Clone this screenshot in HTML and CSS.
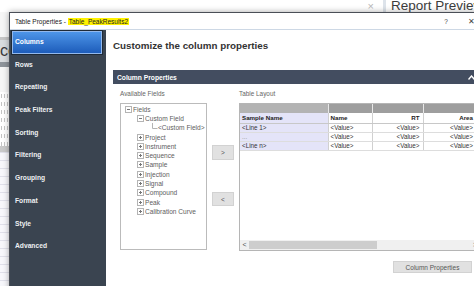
FILE: index.html
```html
<!DOCTYPE html>
<html lang="en">
<head>
  <meta charset="UTF-8" />
  <meta name="viewport" content="width=device-width, initial-scale=1.0" />
  <title>Table Properties</title>
  <link rel="stylesheet" href="styles.css">
</head>
<body>
  <div class="backdrop">
    <div class="bg-top">
      <div class="bg-pane"><span class="bg-close">×</span></div>
      <div class="bg-preview">Report Preview</div>
    </div>
    <div class="bg-strip">
      <div class="bg-gap"></div>
      <div class="bg-rule"></div>
      <div class="bg-head">ce</div>
      <div class="bg-rule dark"></div>
      <div class="bg-gap"></div>
      <div class="bg-dots"></div>
      <div class="bg-band"></div>
      <div class="bg-lines"></div>
    </div>
  </div>

  <div class="dialog">
    <div class="titlebar">
      <span class="title">Table Properties - <mark>Table_PeakResults2</mark></span>
      <span class="help">?</span>
      <span class="close">✕</span>
    </div>

    <div class="dialog-body">
      <nav class="sidebar">
        <a class="active" href="#">Columns</a>
        <a href="#">Rows</a>
        <a href="#">Repeating</a>
        <a href="#">Peak Filters</a>
        <a href="#">Sorting</a>
        <a href="#">Filtering</a>
        <a href="#">Grouping</a>
        <a href="#">Format</a>
        <a href="#">Style</a>
        <a href="#">Advanced</a>
      </nav>

      <section class="content">
        <h1>Customize the column properties</h1>

        <div class="section-bar">
          <span>Column Properties</span>
          <svg width="7" height="5" viewBox="0 0 7 5"><polyline points="0.5,4.5 3.5,1 6.5,4.5" fill="none" stroke="#fff" stroke-width="1.4"/></svg>
        </div>

        <div class="editor">
          <div class="fields">
            <div class="label">Available Fields</div>
            <div class="tree">
              <div class="node"><svg class="exp" width="8" height="7" viewBox="0 0 8 7"><rect x="0.5" y="0.5" width="6" height="6" fill="#fff" stroke="#b4b4b4"/><path d="M2 3.5h3" stroke="#777"/></svg>Fields</div>
              <div class="node l1"><svg class="exp" width="8" height="7" viewBox="0 0 8 7"><rect x="0.5" y="0.5" width="6" height="6" fill="#fff" stroke="#b4b4b4"/><path d="M2 3.5h3" stroke="#777"/></svg>Custom Field</div>
              <div class="node l2"><svg class="leaf" width="8" height="9" viewBox="0 0 8 9"><path d="M2.5 0v5.5h5" fill="none" stroke="#b4b4b4"/></svg>&lt;Custom Field&gt;</div>
              <div class="node l1"><svg class="exp" width="8" height="7" viewBox="0 0 8 7"><rect x="0.5" y="0.5" width="6" height="6" fill="#fff" stroke="#b4b4b4"/><path d="M2 3.5h3M3.5 2v3" stroke="#777"/></svg>Project</div>
              <div class="node l1"><svg class="exp" width="8" height="7" viewBox="0 0 8 7"><rect x="0.5" y="0.5" width="6" height="6" fill="#fff" stroke="#b4b4b4"/><path d="M2 3.5h3M3.5 2v3" stroke="#777"/></svg>Instrument</div>
              <div class="node l1"><svg class="exp" width="8" height="7" viewBox="0 0 8 7"><rect x="0.5" y="0.5" width="6" height="6" fill="#fff" stroke="#b4b4b4"/><path d="M2 3.5h3M3.5 2v3" stroke="#777"/></svg>Sequence</div>
              <div class="node l1"><svg class="exp" width="8" height="7" viewBox="0 0 8 7"><rect x="0.5" y="0.5" width="6" height="6" fill="#fff" stroke="#b4b4b4"/><path d="M2 3.5h3M3.5 2v3" stroke="#777"/></svg>Sample</div>
              <div class="node l1"><svg class="exp" width="8" height="7" viewBox="0 0 8 7"><rect x="0.5" y="0.5" width="6" height="6" fill="#fff" stroke="#b4b4b4"/><path d="M2 3.5h3M3.5 2v3" stroke="#777"/></svg>Injection</div>
              <div class="node l1"><svg class="exp" width="8" height="7" viewBox="0 0 8 7"><rect x="0.5" y="0.5" width="6" height="6" fill="#fff" stroke="#b4b4b4"/><path d="M2 3.5h3M3.5 2v3" stroke="#777"/></svg>Signal</div>
              <div class="node l1"><svg class="exp" width="8" height="7" viewBox="0 0 8 7"><rect x="0.5" y="0.5" width="6" height="6" fill="#fff" stroke="#b4b4b4"/><path d="M2 3.5h3M3.5 2v3" stroke="#777"/></svg>Compound</div>
              <div class="node l1"><svg class="exp" width="8" height="7" viewBox="0 0 8 7"><rect x="0.5" y="0.5" width="6" height="6" fill="#fff" stroke="#b4b4b4"/><path d="M2 3.5h3M3.5 2v3" stroke="#777"/></svg>Peak</div>
              <div class="node l1"><svg class="exp" width="8" height="7" viewBox="0 0 8 7"><rect x="0.5" y="0.5" width="6" height="6" fill="#fff" stroke="#b4b4b4"/><path d="M2 3.5h3M3.5 2v3" stroke="#777"/></svg>Calibration Curve</div>
            </div>
          </div>

          <div class="movers">
            <button class="add">&gt;</button>
            <button class="remove">&lt;</button>
          </div>

          <div class="layout">
            <div class="label">Table Layout</div>
            <div class="grid-box">
              <table class="grid">
                <colgroup>
                  <col class="c-sample"><col class="c-name"><col class="c-rt"><col class="c-area">
                </colgroup>
                <tr class="band"><td class="key"></td><td></td><td></td><td></td></tr>
                <tr class="head"><th class="key">Sample Name</th><th>Name</th><th class="num">RT</th><th class="num">Area</th></tr>
                <tr><td class="key">&lt;Line 1&gt;</td><td>&lt;Value&gt;</td><td class="num">&lt;Value&gt;</td><td class="num">&lt;Value&gt;</td></tr>
                <tr><td class="key dots">...</td><td>&lt;Value&gt;</td><td class="num">&lt;Value&gt;</td><td class="num">&lt;Value&gt;</td></tr>
                <tr><td class="key">&lt;Line n&gt;</td><td>&lt;Value&gt;</td><td class="num">&lt;Value&gt;</td><td class="num">&lt;Value&gt;</td></tr>
              </table>
              <div class="hscroll">
                <span class="arrow">&lt;</span>
                <span class="thumb"></span>
                <span class="arrow right">&gt;</span>
              </div>
            </div>
            <div class="actions">
              <button>Column Properties</button>
            </div>
          </div>
        </div>
      </section>
    </div>
  </div>
</body>
</html>
```

FILE: styles.css
```css
* {
  box-sizing: border-box;
}

body {
  margin: 0;
  width: 474px;
  height: 286px;
  overflow: hidden;
  position: relative;
  font-family: "Liberation Sans", Arial, sans-serif;
  background-color: #fff;
  color: #333;
}

/* window behind the dialog */
.backdrop {
  display: flex;
  flex-direction: column;
  height: 286px;
}

.bg-top {
  display: flex;
  height: 12px;
  flex: none;
}

.bg-pane {
  width: 383px;
  display: flex;
  justify-content: flex-end;
  align-items: center;
  padding-right: 9px;
}

.bg-close {
  font-size: 11px;
  line-height: 12px;
  color: #b8b8b8;
}

.bg-preview {
  flex: 1;
  border-left: 3px solid #dde3ea;
  padding-left: 5px;
  font-size: 13.5px;
  line-height: 12px;
  color: #3c3c3c;
  white-space: nowrap;
  overflow: hidden;
}

.bg-strip {
  width: 9px;
  flex: 1;
  display: flex;
  flex-direction: column;
  overflow: hidden;
}

.bg-gap {
  height: 25px;
  background-color: #f6f6f6;
}

.bg-rule {
  height: 3px;
  background-color: #c6c6c6;
}

.bg-rule.dark {
  height: 5px;
  background-color: #8e949a;
}

.bg-head {
  height: 22px;
  background-color: #d9dcdf;
  color: #3a3a3a;
  font-size: 16px;
  line-height: 22px;
  white-space: nowrap;
}

.bg-dots {
  height: 54px;
  background-image: radial-gradient(#c4c4c4 0.6px, transparent 0.8px);
  background-size: 3px 8px;
}

.bg-band {
  height: 6px;
  background-color: #c9c9c9;
}

.bg-lines {
  flex: 1;
  background-color: #f7f7fb;
  background-image: linear-gradient(#e0e0ea 1px, transparent 1px);
  background-size: 100% 8px;
}

/* dialog */
.dialog {
  position: absolute;
  left: 9px;
  top: 12px;
  width: 470px;
  height: 280px;
  border: 1px solid #4a4f57;
  background-color: #fff;
  box-shadow: 0 0 6px rgba(0, 0, 0, 0.35);
  display: flex;
  flex-direction: column;
}

.titlebar {
  height: 17px;
  flex: none;
  display: flex;
  align-items: center;
  padding: 0 2px 0 5px;
  border-bottom: 1px solid #cdd8e5;
  font-size: 6.5px;
  color: #222;
}

.titlebar mark {
  background-color: #fff200;
  color: #222;
  padding: 0 1px;
}

.help {
  margin-left: auto;
  width: 10px;
  text-align: center;
  color: #444;
}

.close {
  width: 10px;
  margin-left: 15px;
  text-align: center;
  font-size: 8px;
  color: #444;
}

.dialog-body {
  flex: 1;
  display: flex;
  min-height: 0;
}

.sidebar {
  width: 96px;
  flex: none;
  background-color: #3a4450;
  padding: 1px 4px 0 2px;
  display: flex;
  flex-direction: column;
}

.sidebar a {
  height: 22.7px;
  line-height: 22.7px;
  padding-left: 3px;
  color: #eef0f2;
  font-weight: bold;
  font-size: 6.7px;
  text-decoration: none;
}

.sidebar a.active {
  background: linear-gradient(#4d95e8, #1d5cba);
  border: 1px solid #92b8ec;
  box-shadow: 0 0 0 1px #1f2a36;
  line-height: 20.7px;
  padding-left: 2px;
  color: #fff;
}

.content {
  flex: 1;
  min-width: 0;
  padding-left: 7px;
  display: flex;
  flex-direction: column;
}

.content h1 {
  margin: 10px 0 18px;
  font-size: 9.8px;
  line-height: 12px;
  color: #333;
}

.section-bar {
  height: 14px;
  flex: none;
  background-color: #434d60;
  color: #fff;
  font-weight: bold;
  font-size: 6.7px;
  display: flex;
  align-items: center;
  justify-content: space-between;
  padding: 0 3px 0 4px;
}

.editor {
  display: flex;
  padding: 6px 0 0 7px;
}

.label {
  font-size: 6.4px;
  line-height: 8px;
  color: #666;
  margin-bottom: 5px;
}

.tree {
  width: 87px;
  height: 147px;
  border: 1px solid #bbb;
  padding: 0.5px 0 0 4px;
  font-size: 6.6px;
  color: #606060;
}

.node {
  height: 9.3px;
  display: flex;
  align-items: center;
  white-space: nowrap;
}

.node.l1 {
  padding-left: 12px;
}

.node.l2 {
  padding-left: 25px;
}

.node svg {
  flex: none;
}

.movers {
  width: 22px;
  flex: none;
  margin-left: 5px;
  padding-top: 55px;
  display: flex;
  flex-direction: column;
}

.movers button,
.actions button {
  font-family: inherit;
  font-size: 6.5px;
  color: #555;
  background-color: #e1e1e1;
  border: 1px solid #d2d2d2;
  padding: 0;
}

.movers .add {
  height: 15px;
}

.movers .remove {
  height: 14px;
  margin-top: 32px;
}

.layout {
  flex: 1;
  min-width: 0;
  margin-left: 5px;
}

.grid-box {
  height: 148px;
  border: 1px solid #b5b5b5;
  display: flex;
  flex-direction: column;
}

.grid {
  width: 100%;
  border-collapse: collapse;
  table-layout: fixed;
  font-size: 6.3px;
  color: #333;
}

.c-sample { width: 88px; }
.c-name { width: 44px; }
.c-rt { width: 51px; }

.grid td,
.grid th {
  height: 9px;
  padding: 0 3px 0 2px;
  border-right: 1px solid #d0d0d0;
  border-bottom: 1px solid #dddddd;
  text-align: left;
  white-space: nowrap;
  overflow: hidden;
}

.grid .num {
  text-align: right;
}

.grid .key {
  background-color: #e4e4f8;
}

.grid .band td {
  background-color: #9e9e9e;
  border-right: 1px solid #e8e8e8;
  border-bottom: none;
}

.grid .band td.key {
  background-color: #b3b3b3;
}

.grid .head th {
  height: 10px;
  font-size: 6.2px;
  font-weight: bold;
  color: #222;
  border-bottom-color: #c8c8c8;
}

.grid .dots {
  color: #999;
}

.hscroll {
  margin-top: auto;
  height: 10px;
  display: flex;
  align-items: stretch;
  background-color: #f0f0f0;
}

.hscroll .arrow {
  width: 9px;
  font-size: 7px;
  line-height: 10px;
  text-align: center;
  color: #555;
}

.hscroll .thumb {
  width: 128px;
  margin: 1px 0;
  background-color: #cdcdcd;
}

.hscroll .right {
  margin-left: auto;
  text-align: right;
}

.actions {
  display: flex;
  justify-content: flex-end;
  padding: 10px 6px 0 0;
}

.actions button {
  width: 79px;
  height: 12px;
}
```
